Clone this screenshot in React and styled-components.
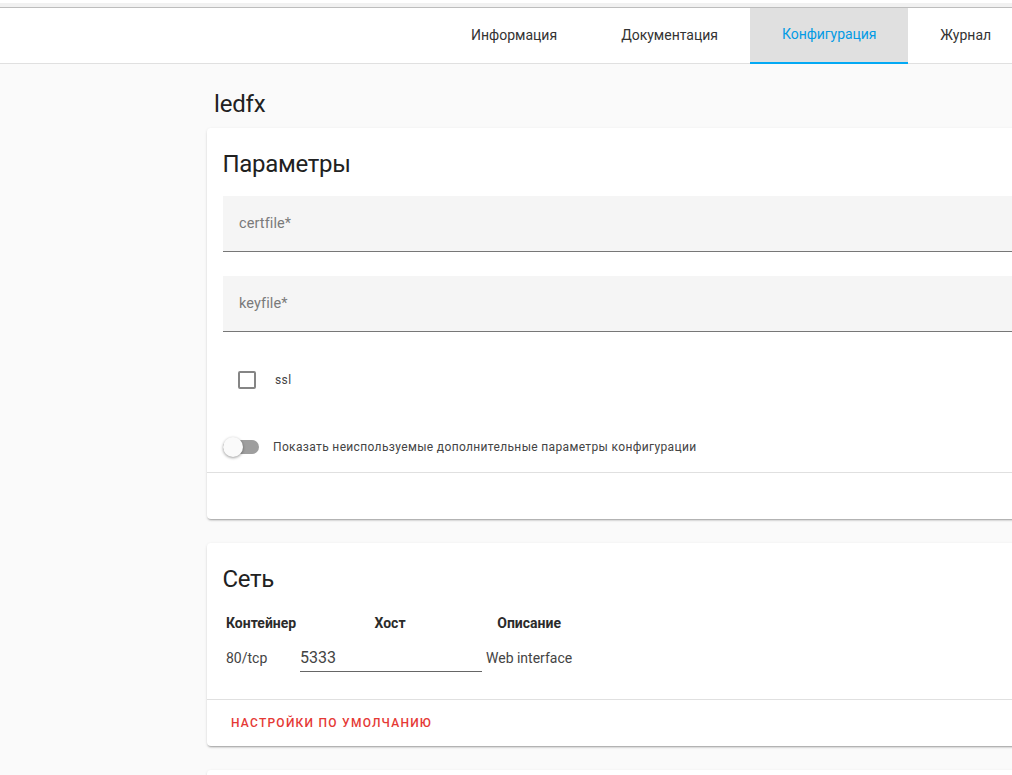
import styled, { createGlobalStyle } from "styled-components";

const GlobalStyle = createGlobalStyle`
  html, body {
    margin: 0;
    height: 100%;
    overflow: hidden;
    background: #fafafa;
    font-family: Roboto, "Liberation Sans", sans-serif;
  }
  * { box-sizing: border-box; }
`;

const TopStrip = styled.div`
  height: 8px;
  background: #f1f1f1;
  border-top: 3px solid #fff;
  border-bottom: 1px solid #bdbdbd;
`;
const TabBar = styled.nav`
  display: flex;
  height: 56px;
  padding-left: 439px;
  background: #fff;
  border-bottom: 1px solid #e0e0e0;
  width: 1100px;
`;
const Tab = styled.div`
  flex: none;
  height: ${(p) => (p.$active ? "56px" : "55px")};
  padding: ${(p) => (p.$active ? "18px" : "19px")} 32px 0;
  font-size: 14px;
  line-height: 16px;
  letter-spacing: ${(p) => (p.$active ? "-0.07px" : "0")};
  color: ${(p) => (p.$active ? "#039be5" : "#333")};
  background: ${(p) => (p.$active ? "#e0e0e0" : "transparent")};
  border-bottom: ${(p) => (p.$active ? "2px solid #03a9f4" : "none")};
`;
const Main = styled.main`
  width: 1100px;
  padding: 0 0 0 207px;
`;
const PageTitle = styled.h1`
  margin: 0;
  height: 64px;
  padding: 24px 0 0 7px;
  font-size: 24px;
  line-height: 32px;
  font-weight: 400;
  letter-spacing: -0.2px;
  color: #212121;
`;
const Card = styled.section`
  background: #fff;
  border-radius: 4px;
  margin-bottom: 24px;
  box-shadow: 0 2px 2px -1px rgba(0, 0, 0, 0.3), 0 1px 3px rgba(0, 0, 0, 0.12);
`;
const EmptyCard = styled(Card)`
  height: 100px;
`;
const CardTitle = styled.h2`
  margin: 0;
  padding: 20px 16px 0 15.5px;
  height: 68px;
  font-size: 24px;
  line-height: 32px;
  font-weight: 400;
  letter-spacing: -0.3px;
  color: #212121;
`;
const Field = styled.div`
  height: 56px;
  margin: 0 0 24px 16px;
  padding: 18px 16px 0;
  background: #f5f5f5;
  border-bottom: 1px solid #777;
  line-height: 19px;
  color: #7a7a7a;
  font-size: 14.5px;
  letter-spacing: 0.1px;
`;
const CheckRow = styled.div`
  display: flex;
  align-items: center;
  height: 18px;
  margin: 39px 0 0 31px;
`;
const CheckBox = styled.span`
  flex: none;
  width: 18px;
  height: 18px;
  border: 2px solid #858585;
  border-radius: 2px;
`;
const CheckLabel = styled.label`
  margin-left: 19px;
  font-size: 12px;
  letter-spacing: 0.4px;
  color: #444;
`;
const ToggleRow = styled.div`
  display: flex;
  align-items: center;
  height: 20px;
  margin: 48px 0 0 16px;
`;
const Toggle = styled.span`
  position: relative;
  flex: none;
  width: 36px;
  height: 14px;
  background: #9e9e9e;
  border-radius: 7px;
`;
const Thumb = styled.span`
  position: absolute;
  left: 0;
  top: -3px;
  width: 20px;
  height: 20px;
  border-radius: 50%;
  background: #fafafa;
  box-shadow: 0 1px 3px rgba(0, 0, 0, 0.4);
`;
const ToggleLabel = styled.span`
  margin-left: 14px;
  font-size: 12px;
  letter-spacing: 0.35px;
  color: #444;
`;
const CardActions = styled.div`
  height: 47px;
  margin-top: ${(p) => p.$top};
  padding: 15px 24px 0;
  border-top: 1px solid #e0e0e0;
`;
const PortTable = styled.div`
  display: grid;
  grid-template-columns: 74px 186px auto;
  grid-template-rows: 20px 28px;
  row-gap: 11px;
  align-items: center;
  padding: 2px 0 0 19px;
  width: max-content;
`;
const HeadCell = styled.div`
  margin-right: ${(p) => p.$inset || "0"};
  font-size: 14px;
  font-weight: 700;
  color: #2b2b2b;
  text-align: ${(p) => p.$align || "left"};
`;
const BodyCell = styled.div`
  font-size: 14px;
  color: #444;
`;
const PortInput = styled.div`
  height: 28px;
  margin-right: 4px;
  padding-top: 4px;
  font-size: 16px;
  line-height: 20px;
  color: #444;
  border-bottom: 1px solid #666;
`;
const WarnButton = styled.button`
  display: block;
  padding: 0;
  border: none;
  background: none;
  font: 500 12px/16px Roboto, "Liberation Sans", sans-serif;
  letter-spacing: 1.25px;
  text-transform: uppercase;
  color: #e53935;
`;

const tabs = ["Информация", "Документация", "Конфигурация", "Журнал"];

export default function App() {
  return (
    <>
      <GlobalStyle />
      <TopStrip />
      <TabBar>
        {tabs.map((t) => (
          <Tab key={t} $active={t === "Конфигурация"}>
            {t}
          </Tab>
        ))}
      </TabBar>
      <Main>
        <PageTitle>ledfx</PageTitle>
        <Card>
          <CardTitle>Параметры</CardTitle>
          <Field>certfile*</Field>
          <Field>keyfile*</Field>
          <CheckRow>
            <CheckBox />
            <CheckLabel>ssl</CheckLabel>
          </CheckRow>
          <ToggleRow>
            <Toggle>
              <Thumb />
            </Toggle>
            <ToggleLabel>Показать неиспользуемые дополнительные параметры конфигурации</ToggleLabel>
          </ToggleRow>
          <CardActions $top="15px" />
        </Card>
        <Card>
          <CardTitle>Сеть</CardTitle>
          <PortTable>
            <HeadCell>Контейнер</HeadCell>
            <HeadCell $align="center" $inset="6px">Хост</HeadCell>
            <HeadCell $align="center">Описание</HeadCell>
            <BodyCell>80/tcp</BodyCell>
            <PortInput>5333</PortInput>
            <BodyCell>Web interface</BodyCell>
          </PortTable>
          <CardActions $top="27px">
            <WarnButton>Настройки по умолчанию</WarnButton>
          </CardActions>
        </Card>
        <EmptyCard />
      </Main>
    </>
  );
}
